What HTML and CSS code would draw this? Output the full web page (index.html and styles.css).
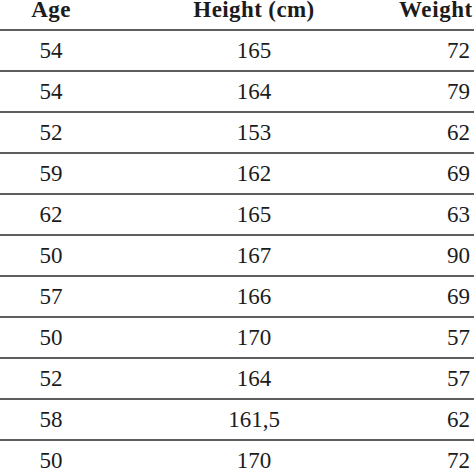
FILE: index.html
```html
<!DOCTYPE html>
<html>
<head>
<meta charset="utf-8">
<link rel="stylesheet" href="styles.css">
</head>
<body>
<table class="data">
  <thead>
    <tr><th class="c1">Age</th><th class="c2">Height (cm)</th><th class="c3">Weight</th></tr>
  </thead>
  <tbody>
    <tr><td>54</td><td>165</td><td>72</td></tr>
    <tr><td>54</td><td>164</td><td>79</td></tr>
    <tr><td>52</td><td>153</td><td>62</td></tr>
    <tr><td>59</td><td>162</td><td>69</td></tr>
    <tr><td>62</td><td>165</td><td>63</td></tr>
    <tr><td>50</td><td>167</td><td>90</td></tr>
    <tr><td>57</td><td>166</td><td>69</td></tr>
    <tr><td>50</td><td>170</td><td>57</td></tr>
    <tr><td>52</td><td>164</td><td>57</td></tr>
    <tr><td>58</td><td>161,5</td><td>62</td></tr>
    <tr><td>50</td><td>170</td><td>72</td></tr>
  </tbody>
</table>
</body>
</html>
```
FILE: styles.css
```css
html, body {
  margin: 0;
  padding: 0;
  background: #ffffff;
  overflow: hidden;
  width: 474px;
  height: 474px;
}
.data {
  border-collapse: collapse;
  table-layout: fixed;
  width: 474px;
  font-family: "Liberation Serif", "Times New Roman", serif;
  font-size: 23px;
  color: #1c1c1c;
}
.data th, .data td {
  padding: 0;
  text-align: center;
  white-space: nowrap;
}
.data th {
  font-weight: bold;
  height: 29px;
  line-height: 20px;
  vertical-align: top;
  letter-spacing: 0.4px;
}
.data .c1 { width: 102px; }
.data .c2 { width: 304px; }
.data .c3 { width: 68px; }
.data th.c3 {
  text-align: left;
  text-indent: -7px;
  letter-spacing: 0.6px;
}
.data td:last-child {
  text-align: right;
  padding-right: 4px;
}
.data tr {
  border-bottom: 2px solid #5e5e5e;
}
.data td {
  height: 39px;
  line-height: 23px;
  vertical-align: middle;
}
```
